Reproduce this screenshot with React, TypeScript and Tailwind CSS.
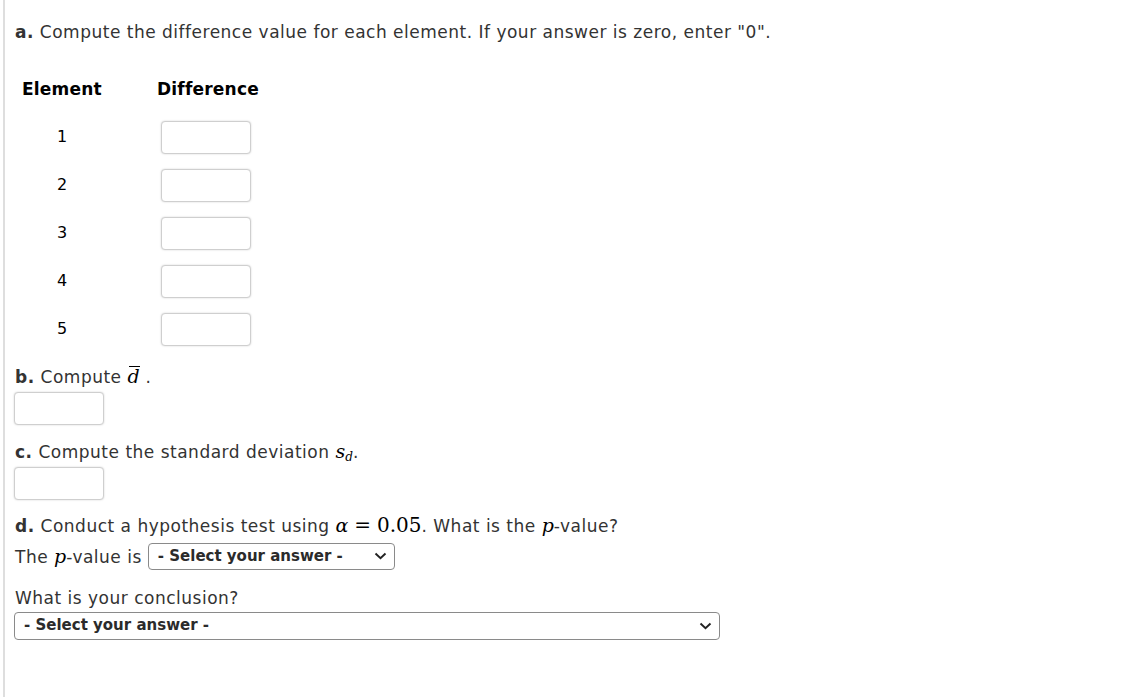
import React from 'react';

const Box: React.FC<{ className?: string }> = ({ className = '' }) => (
  <div
    className={`h-[33px] w-[90px] rounded-[4px] border border-[#cfcfcf] bg-white shadow-[0_0_2px_rgba(0,0,0,0.18)] ${className}`}
  />
);

const Chevron: React.FC = () => (
  <svg width="13" height="8" viewBox="0 0 13 8" className="shrink-0">
    <path d="M1.5 1.5 L6.5 6.3 L11.5 1.5" fill="none" stroke="#222" strokeWidth="1.9" />
  </svg>
);

const Select: React.FC<{ className?: string }> = ({ className = '' }) => (
  <div
    className={`flex items-center justify-between rounded-[4px] border border-[#8a8a8a] bg-white pl-[9px] pr-[7px] ${className}`}
  >
    <span className="text-[15px] font-bold tracking-normal text-[#2b2b2b]">- Select your answer -</span>
    <Chevron />
  </div>
);

const M: React.FC<{ children: React.ReactNode; italic?: boolean; big?: boolean }> = ({
  children,
  italic = true,
  big = false,
}) => (
  <span
    className={`font-['DejaVu_Serif',serif] tracking-normal text-black ${big ? 'text-[20px]' : 'text-[19px]'} ${
      italic ? 'italic' : ''
    }`}
  >
    {children}
  </span>
);

const rows = [1, 2, 3, 4, 5];

export default function App() {
  return (
    <div className="h-[697px] w-[1132px] bg-white font-['DejaVu_Sans',sans-serif] text-[17px] tracking-[0.5px] text-[#333]">
      <div className="ml-[3px] h-full border-l-2 border-[#dedede] pl-[10px] pt-[19px]">
        <p className="leading-[26px]">
          <b>a.</b> Compute the difference value for each element. If your answer is zero, enter "0".
        </p>

        <div className="mt-[32px] grid w-fit grid-cols-[135px_114px] pl-[7px]">
          <div className="h-[36px] font-bold tracking-[0.2px] text-black">Element</div>
          <div className="h-[36px] font-bold tracking-[0.2px] text-black">Difference</div>
          {rows.map((n) => (
            <React.Fragment key={n}>
              <div className="flex h-[48px] items-center pl-[35px] text-[16px] text-black">{n}</div>
              <div className="flex h-[48px] items-center pl-[4px]">
                <Box />
              </div>
            </React.Fragment>
          ))}
        </div>

        <p className="mt-[10px] leading-[26px]">
          <b>b.</b> Compute{' '}
          <span className="relative inline-block">
            <span className="absolute left-[2px] right-0 top-[3px] h-[1px] bg-black" />
            <M>d</M>
          </span>{' '}
          .
        </p>
        <Box className="-ml-px mt-[2px]" />

        <p className="mt-[13px] leading-[26px]">
          <b>c.</b> Compute the standard deviation{' '}
          <M>
            s<sub className="text-[12px]">d</sub>
          </M>
          .
        </p>
        <Box className="-ml-px mt-[2px]" />

        <p className="mt-[12px] leading-[26px]">
          <b>d.</b> Conduct a hypothesis test using <M>α</M> <M italic={false} big>=</M>{' '}
          <M italic={false} big>
            0.05
          </M>
          . What is the <M>p</M>-value?
        </p>
        <div className="mt-[3px] flex items-center gap-[6px]">
          <span>
            The <M>p</M>-value is
          </span>
          <Select className="h-[27px] w-[247px]" />
        </div>

        <p className="mt-[14px] leading-[26px]">What is your conclusion?</p>
        <Select className="-ml-px mt-[1px] h-[28px] w-[706px]" />
      </div>
    </div>
  );
}
